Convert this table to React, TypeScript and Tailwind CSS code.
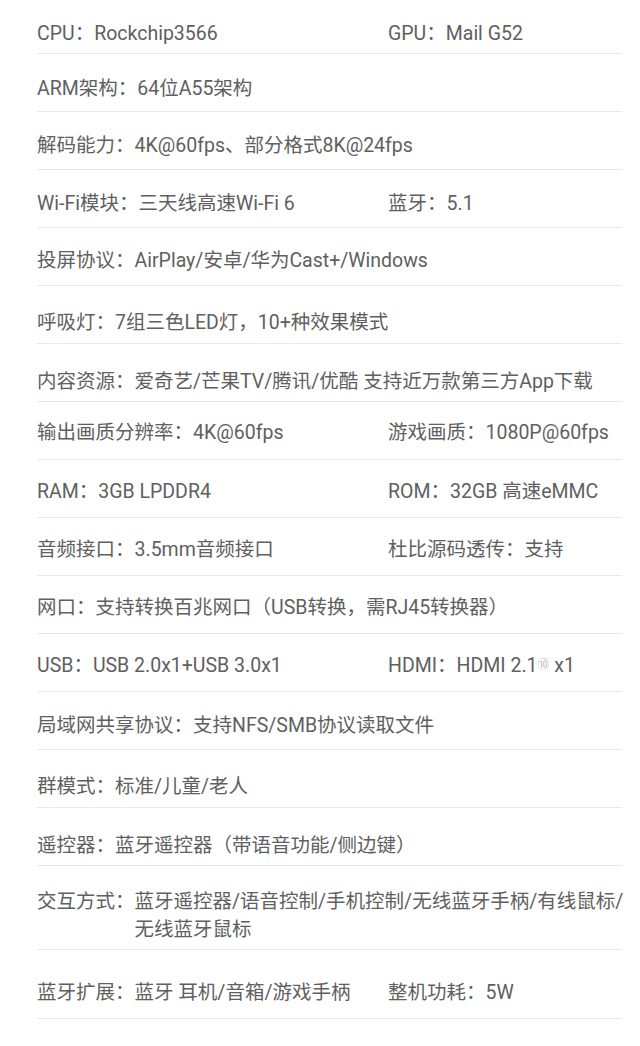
import { ReactNode } from "react";

type Spec = { label: string; value: ReactNode };
type Row = { items: Spec[]; box: string };

// row heights / top offsets follow the reference screenshot
const rows: Row[] = [
  { box: "h-[54px] pt-[20px]", items: [{ label: "CPU", value: "Rockchip3566" }, { label: "GPU", value: "Mail G52" }] },
  { box: "h-[58px] pt-[21px]", items: [{ label: "ARM架构", value: "64位A55架构" }] },
  { box: "h-[58px] pt-[20px]", items: [{ label: "解码能力", value: "4K@60fps、部分格式8K@24fps" }] },
  { box: "h-[58px] pt-[20px]", items: [{ label: "Wi-Fi模块", value: "三天线高速Wi-Fi 6" }, { label: "蓝牙", value: "5.1" }] },
  { box: "h-[58px] pt-[19px]", items: [{ label: "投屏协议", value: "AirPlay/安卓/华为Cast+/Windows" }] },
  { box: "h-[58px] pt-[23px]", items: [{ label: "呼吸灯", value: "7组三色LED灯，10+种效果模式" }] },
  { box: "h-[58px] pt-[24px]", items: [{ label: "内容资源", value: "爱奇艺/芒果TV/腾讯/优酷 支持近万款第三方App下载" }] },
  { box: "h-[58px] pt-[17px]", items: [{ label: "输出画质分辨率", value: "4K@60fps" }, { label: "游戏画质", value: "1080P@60fps" }] },
  { box: "h-[58px] pt-[18px]", items: [{ label: "RAM", value: "3GB LPDDR4" }, { label: "ROM", value: "32GB 高速eMMC" }] },
  { box: "h-[58px] pt-[18px]", items: [{ label: "音频接口", value: "3.5mm音频接口" }, { label: "杜比源码透传", value: "支持" }] },
  { box: "h-[58px] pt-[18px]", items: [{ label: "网口", value: "支持转换百兆网口（USB转换，需RJ45转换器）" }] },
  {
    box: "h-[58px] pt-[18px]",
    items: [
      { label: "USB", value: "USB 2.0x1+USB 3.0x1" },
      {
        label: "HDMI",
        value: (
          <>
            HDMI 2.1
            <sup className="relative -top-[3px] text-[12px] text-[#bdbdbd]">⑩</sup> x1
          </>
        ),
      },
    ],
  },
  { box: "h-[58px] pt-[20px]", items: [{ label: "局域网共享协议", value: "支持NFS/SMB协议读取文件" }] },
  { box: "h-[58px] pt-[23px]", items: [{ label: "群模式", value: "标准/儿童/老人" }] },
  { box: "h-[58px] pt-[24px]", items: [{ label: "遥控器", value: "蓝牙遥控器（带语音功能/侧边键）" }] },
  {
    box: "h-[84px] pt-[22px]",
    items: [
      {
        label: "交互方式",
        value: (
          <>
            蓝牙遥控器/语音控制/手机控制/无线蓝牙手柄/有线鼠标/
            <br />
            无线蓝牙鼠标
          </>
        ),
      },
    ],
  },
  { box: "h-[69px] pt-[29px]", items: [{ label: "蓝牙扩展", value: "蓝牙 耳机/音箱/游戏手柄" }, { label: "整机功耗", value: "5W" }] },
];

function SpecItem({ spec, first, paired }: { spec: Spec; first: boolean; paired: boolean }) {
  return (
    <div className={`flex ${first && paired ? "w-[351px] shrink-0" : "min-w-0"}`}>
      <span className="shrink-0 whitespace-nowrap">{spec.label}：</span>
      <span className="whitespace-nowrap">{spec.value}</span>
    </div>
  );
}

export default function App() {
  return (
    <div
      className="min-h-[1046px] w-[640px] bg-white pl-[37px] pr-[18px] text-[19.5px] leading-[28px] text-[#606060]"
      style={{ fontFamily: 'Roboto, "Noto Sans CJK SC", sans-serif' }}
    >
      {rows.map((row, i) => (
        <div key={i} className={`flex border-b border-[#e8e8e8] ${row.box}`}>
          {row.items.map((spec, j) => (
            <SpecItem key={spec.label} spec={spec} first={j === 0} paired={row.items.length > 1} />
          ))}
        </div>
      ))}
    </div>
  );
}
